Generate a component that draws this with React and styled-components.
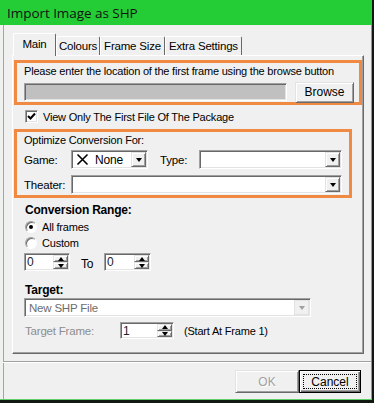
import React from 'react';
import styled, { createGlobalStyle } from 'styled-components';

const GlobalStyle = createGlobalStyle`
  html, body {
    margin: 0;
    padding: 0;
    background: #111812;
  }
  body {
    font-family: "Liberation Sans", Arial, sans-serif;
    font-size: 11px;
    letter-spacing: -0.2px;
    color: #000;
  }
  #root {
    width: 374px;
    height: 403px;
    overflow: hidden;
  }
`;

const sunken = `
  border: 1px solid;
  border-color: #a0a0a0 #ffffff #ffffff #a0a0a0;
  box-shadow: inset 1px 1px 0 #696969, inset -1px -1px 0 #e3e3e3;
`;

const raised = `
  border: 1px solid;
  border-color: #e3e3e3 #696969 #696969 #e3e3e3;
  box-shadow: inset 1px 1px 0 #ffffff, inset -1px -1px 0 #a0a0a0;
`;

const TabList = [
  { label: 'Main', w: 43 },
  { label: 'Colours', w: 44 },
  { label: 'Frame Size', w: 65 },
  { label: 'Extra Settings', w: 77 },
];

const App = () => {
  return (
    <>
      <GlobalStyle />
      <Window>
        <TitleBar>Import Image as SHP</TitleBar>
        <Body>
          <TabRow>
            {TabList.map((t, i) => (
              <Tab key={t.label} $w={t.w} $active={i === 0}>
                {t.label}
              </Tab>
            ))}
          </TabRow>
          <Panel>
            <OrangeBox $w={348} $h={45}>
              <BoxTitle>Please enter the location of the first frame using the browse button</BoxTitle>
              <BrowseRow>
                <PathField />
                <PushButton $w={59}>Browse</PushButton>
              </BrowseRow>
            </OrangeBox>

            <CheckRow>
              <CheckBox>
                <svg width="9" height="9" viewBox="0 0 9 9">
                  <path d="M1 4 L3.5 6.5 L8 1.5" fill="none" stroke="#000" strokeWidth="2" />
                </svg>
              </CheckBox>
              <span>View Only The First File Of The Package</span>
            </CheckRow>

            <OrangeBox $w={338} $h={69} $top={6}>
              <BoxTitle>Optimize Conversion For:</BoxTitle>
              <FieldRow $top={3}>
                <FieldLabel $w={47}>Game:</FieldLabel>
                <Combo $w={77}>
                  <ComboValue>
                    <svg width="13" height="13" viewBox="0 0 13 13">
                      <path d="M1.5 1.5 L11.5 11.5 M11.5 1.5 L1.5 11.5" stroke="#000" strokeWidth="1.6" />
                    </svg>
                    <NoneText>None</NoneText>
                  </ComboValue>
                  <DropButton><Arrow /></DropButton>
                </Combo>
                <FieldLabel $w={39} $left={12}>Type:</FieldLabel>
                <Combo $w={143}>
                  <ComboValue />
                  <DropButton><Arrow /></DropButton>
                </Combo>
              </FieldRow>
              <FieldRow $top={6}>
                <FieldLabel $w={47}>Theater:</FieldLabel>
                <Combo $w={271}>
                  <ComboValue />
                  <DropButton><Arrow /></DropButton>
                </Combo>
              </FieldRow>
            </OrangeBox>

            <Section>
              <GroupTitle $top={5}>Conversion Range:</GroupTitle>
              <RadioRow $top={4}>
                <Radio $checked />
                <span>All frames</span>
              </RadioRow>
              <RadioRow $top={4}>
                <Radio />
                <span>Custom</span>
              </RadioRow>
              <SpinRow>
                <Spinner $w={46} $h={18}>
                  <SpinValue>0</SpinValue>
                  <SpinButtons>
                    <SpinHalf><Arrow $up /></SpinHalf>
                    <SpinHalf><Arrow /></SpinHalf>
                  </SpinButtons>
                </Spinner>
                <ToLabel>To</ToLabel>
                <Spinner $w={47} $h={18}>
                  <SpinValue>0</SpinValue>
                  <SpinButtons>
                    <SpinHalf><Arrow $up /></SpinHalf>
                    <SpinHalf><Arrow /></SpinHalf>
                  </SpinButtons>
                </Spinner>
              </SpinRow>

              <GroupTitle $top={12}>Target:</GroupTitle>
              <Combo $w={287} $top={1}>
                <ComboValue $disabled>New SHP File</ComboValue>
                <DropButton $flat><Arrow $color="#a0a0a0" /></DropButton>
              </Combo>
              <TargetRow>
                <FieldLabel $w={95} $disabled>Target Frame:</FieldLabel>
                <Spinner $w={54} $h={17}>
                  <SpinValue>1</SpinValue>
                  <SpinButtons>
                    <SpinHalf><Arrow $up /></SpinHalf>
                    <SpinHalf><Arrow /></SpinHalf>
                  </SpinButtons>
                </Spinner>
                <Hint>(Start At Frame 1)</Hint>
              </TargetRow>
            </Section>
          </Panel>

          <Separator />

          <ButtonBar>
            <DialogButton $w={64} disabled>OK</DialogButton>
            <DialogButton $w={62} $default>
              <FocusRect>Cancel</FocusRect>
            </DialogButton>
          </ButtonBar>
        </Body>
      </Window>
    </>
  );
};

export default App;

const Window = styled.div`
  width: 372px;
  height: 400px;
  display: flex;
  flex-direction: column;
  box-sizing: border-box;
  background: #f0f0f0;
  border-bottom: 1px solid #5fcf69;
`;

const TitleBar = styled.div`
  height: 25px;
  flex: none;
  display: flex;
  align-items: center;
  padding-left: 7px;
  background: #24cd35;
  color: #121212;
  font-family: "Open Sans", "Noto Sans", sans-serif;
  font-size: 13.5px;
  letter-spacing: -0.05px;
`;

const Body = styled.div`
  flex: 1;
  display: flex;
  flex-direction: column;
  padding: 8px 7px 0 9px;
  border-left: 3px solid #eef1ee;
  border-right: 1px solid #3fcf4d;
  box-shadow: inset 1px 0 0 #66d070;
`;

const TabRow = styled.div`
  display: flex;
  align-items: flex-end;
  height: 22px;
  padding-left: 1px;
`;

const Tab = styled.div`
  position: relative;
  z-index: ${(p) => (p.$active ? 1 : 0)};
  box-sizing: border-box;
  width: ${(p) => p.$w}px;
  height: ${(p) => (p.$active ? 23 : 19)}px;
  margin-bottom: ${(p) => (p.$active ? -1 : 0)}px;
  display: flex;
  align-items: center;
  justify-content: center;
  padding-bottom: ${(p) => (p.$active ? 2 : 0)}px;
  background: #f0f0f0;
  border: 1px solid;
  border-color: #ffffff #696969 transparent #ffffff;
  border-bottom: none;
  border-radius: 2px 2px 0 0;
  font-size: 11.5px;
`;

const Panel = styled.div`
  box-sizing: border-box;
  height: 299px;
  padding: 4px 0 0 1px;
  border: 1px solid;
  border-color: #ffffff #696969 #696969 #ffffff;
  box-shadow: inset -1px -1px 0 #a0a0a0;
`;

const OrangeBox = styled.div`
  box-sizing: border-box;
  width: ${(p) => p.$w}px;
  height: ${(p) => p.$h}px;
  margin-top: ${(p) => p.$top || 0}px;
  padding: 1px 5px 0 7px;
  border: 3px solid #f08a43;
`;

const BoxTitle = styled.div`
  line-height: 14px;
  white-space: nowrap;
`;

const BrowseRow = styled.div`
  display: flex;
  align-items: center;
  gap: 8px;
  margin-top: 4px;
  height: 20px;
`;

const PathField = styled.div`
  box-sizing: border-box;
  width: 263px;
  height: 18px;
  background: #c0c0c0;
  ${sunken}
`;

const PushButton = styled.button`
  box-sizing: border-box;
  width: ${(p) => p.$w}px;
  height: 21px;
  padding: 0;
  background: #f0f0f0;
  font: inherit;
  font-size: 12px;
  color: #000;
  ${raised}
`;

const CheckRow = styled.div`
  display: flex;
  align-items: center;
  gap: 5px;
  height: 13px;
  margin: 5px 0 0 11px;
`;

const CheckBox = styled.div`
  box-sizing: border-box;
  width: 13px;
  height: 13px;
  display: flex;
  align-items: center;
  justify-content: center;
  background: #fff;
  ${sunken}
`;

const FieldRow = styled.div`
  display: flex;
  align-items: center;
  height: 19px;
  margin-top: ${(p) => p.$top}px;
`;

const FieldLabel = styled.div`
  width: ${(p) => p.$w}px;
  margin-left: ${(p) => p.$left || 0}px;
  flex: none;
  color: ${(p) => (p.$disabled ? '#8d8d8d' : '#000')};
  font-size: 11.5px;
`;

const Combo = styled.div`
  box-sizing: border-box;
  width: ${(p) => p.$w}px;
  height: 19px;
  margin-top: ${(p) => p.$top || 0}px;
  display: flex;
  padding: 1px;
  background: #fff;
  ${sunken}
`;

const ComboValue = styled.div`
  flex: 1;
  display: flex;
  align-items: center;
  padding-left: 3px;
  color: ${(p) => (p.$disabled ? '#6d6d6d' : '#000')};
  font-size: 11.5px;
`;

const NoneText = styled.span`
  margin-left: 6px;
  font-size: 12px;
`;

const DropButton = styled.div`
  box-sizing: border-box;
  width: 15px;
  display: flex;
  align-items: center;
  justify-content: center;
  background: #f0f0f0;
  ${(p) => (p.$flat ? 'border: 1px solid #e3e3e3;' : raised)}
`;

const Arrow = styled.span`
  width: 0;
  height: 0;
  border-left: 3.5px solid transparent;
  border-right: 3.5px solid transparent;
  ${(p) => (p.$up ? 'border-bottom' : 'border-top')}: 4px solid ${(p) => p.$color || '#000'};
`;

const Section = styled.div`
  display: flex;
  flex-direction: column;
  align-items: flex-start;
  padding-left: 10px;
`;

const GroupTitle = styled.div`
  margin: ${(p) => p.$top}px 0 0 1px;
  line-height: 14px;
  font-weight: bold;
  font-size: 12px;
`;

const RadioRow = styled.div`
  display: flex;
  align-items: center;
  gap: 5px;
  height: 12px;
  margin: ${(p) => p.$top}px 0 0 1px;
`;

const Radio = styled.div`
  box-sizing: border-box;
  width: 12px;
  height: 12px;
  border-radius: 50%;
  display: flex;
  align-items: center;
  justify-content: center;
  background: #fff;
  border: 1px solid;
  border-color: #a0a0a0 #ffffff #ffffff #a0a0a0;
  box-shadow: inset 1px 1px 0 #696969;

  &::after {
    content: '';
    width: 4px;
    height: 4px;
    border-radius: 50%;
    background: ${(p) => (p.$checked ? '#000' : 'transparent')};
  }
`;

const SpinRow = styled.div`
  display: flex;
  align-items: center;
  margin-top: 4px;
`;

const Spinner = styled.div`
  box-sizing: border-box;
  width: ${(p) => p.$w}px;
  height: ${(p) => p.$h}px;
  display: flex;
  padding: 1px;
  background: #fff;
  ${sunken}
`;

const SpinValue = styled.div`
  flex: 1;
  display: flex;
  align-items: center;
  padding-left: 1px;
  font-size: 12px;
  color: #222;
`;

const SpinButtons = styled.div`
  width: 15px;
  display: flex;
  flex-direction: column;
`;

const SpinHalf = styled.div`
  box-sizing: border-box;
  flex: 1;
  display: flex;
  align-items: center;
  justify-content: center;
  background: #f0f0f0;
  ${raised}
`;

const ToLabel = styled.div`
  width: 34px;
  padding-left: 11px;
  box-sizing: border-box;
  font-size: 12px;
  margin-top: 4px;
`;

const TargetRow = styled.div`
  display: flex;
  align-items: center;
  margin: 5px 0 0 1px;
`;

const Hint = styled.div`
  margin-left: 10px;
`;

const Separator = styled.div`
  height: 1px;
  margin: 7px -7px 0 -9px;
  background: #a0a0a0;
  border-bottom: 1px solid #ffffff;
`;

const ButtonBar = styled.div`
  display: flex;
  justify-content: flex-end;
  margin: 7px 3px 0 0;
`;

const DialogButton = styled.button`
  box-sizing: border-box;
  width: ${(p) => p.$w}px;
  height: 23px;
  padding: 3px;
  display: flex;
  background: #f0f0f0;
  font: inherit;
  font-size: 12px;
  color: #000;
  ${raised}
  ${(p) => p.$default && `
    border: 1px solid #000;
    box-shadow: inset 1px 1px 0 #ffffff, inset -1px -1px 0 #696969, inset -2px -2px 0 #a0a0a0;
  `}

  &:disabled {
    color: #a0a0a0;
    text-shadow: 1px 1px 0 #ffffff;
    justify-content: center;
    align-items: center;
  }
`;

const FocusRect = styled.span`
  flex: 1;
  display: flex;
  align-items: center;
  justify-content: center;
  border: 1px dotted #000;
`;
